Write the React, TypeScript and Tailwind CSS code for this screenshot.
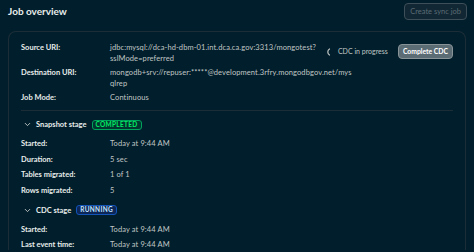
import { ChevronDown } from "lucide-react";

const font = { fontFamily: "Lato, 'Open Sans', sans-serif" };

function Row({ label, children }: { label: string; children: React.ReactNode }) {
  return (
    <div className="grid grid-cols-[89px_1fr] items-start">
      <span className="font-bold text-[#e8edeb]">{label}</span>
      <span className="whitespace-nowrap tracking-[0.1px] text-[#c1c7c6]">{children}</span>
    </div>
  );
}

function StageHeader({ title, badge }: { title: string; badge: "completed" | "running" }) {
  return (
    <div className="flex items-center gap-[4px] pl-[2px]">
      <ChevronDown className="h-[9px] w-[9px] text-[#c1c7c6]" strokeWidth={2.5} />
      <span className="font-bold text-[#e8edeb]">{title}</span>
      {badge === "completed" ? (
        <span className="ml-[1px] rounded-[3px] border border-[#00a35c] bg-[#023430] px-[3px] text-[6.5px] font-bold leading-[8px] tracking-[0.3px] text-[#00ed64]">
          COMPLETED
        </span>
      ) : (
        <span className="ml-[1px] rounded-[3px] border border-[#1254b7] bg-[#0c2657] px-[3px] text-[6.5px] font-bold leading-[8px] tracking-[0.3px] text-[#c3e7fe]">
          RUNNING
        </span>
      )}
    </div>
  );
}

export default function App() {
  return (
    <div className="h-[252px] w-[474px] overflow-hidden bg-[#001e2b] text-[7.5px] leading-[11px]" style={font}>
      <div className="flex items-center justify-between pl-[8px] pr-[7px] pt-[3px]">
        <h1 className="text-[10px] font-bold text-[#e8edeb]">Job overview</h1>
        <button className="h-[17px] rounded-[4px] border border-[#3d4f58] bg-[#112733] px-[5px] text-[7.5px] text-[#5c6c75]">
          Create sync job
        </button>
      </div>

      <div className="mx-[8px] mt-[11px] rounded-t-[8px] border border-b-0 border-[#1c2d38] px-[12px] pt-[10px]">
        <div className="flex items-start justify-between">
          <div className="flex min-w-0 flex-1 flex-col gap-[3px]">
            <Row label="Source URI:">
              jdbc:mysql://dca-hd-dbm-01.int.dca.ca.gov:3313/mongotest?
              <br />
              sslMode=preferred
            </Row>
            <Row label="Destination URI:">
              mongodb+srv://repuser:*****@development.3rfry.mongodbgov.net/mys
              <br />
              qlrep
            </Row>
            <Row label="Job Mode:">Continuous</Row>
          </div>
          <div className="flex shrink-0 items-center gap-[10px] whitespace-nowrap pt-[2px]">
            <div className="flex items-center gap-[7px] text-[7px] text-[#c1c7c6]">
              <svg width="6" height="8" viewBox="0 0 6 8">
                <path d="M4.5 1 A3.5 3.5 0 0 0 4.5 7" fill="none" stroke="#c1c7c6" strokeWidth="1.2" strokeLinecap="round" />
              </svg>
              <span>CDC in progress</span>
            </div>
            <button className="h-[15px] rounded-[4px] border border-[#889397] bg-[#5c6c75] px-[4px] text-[6.8px] font-bold text-white">
              Complete CDC
            </button>
          </div>
        </div>

        <div className="mt-[7px] h-px bg-[#1c2d38]" />

        <div className="mt-[8px] flex flex-col">
          <StageHeader title="Snapshot stage" badge="completed" />
          <div className="mt-[8px] flex flex-col gap-[4.5px]">
            <Row label="Started:">Today at 9:44 AM</Row>
            <Row label="Duration:">5 sec</Row>
            <Row label="Tables migrated:">1 of 1</Row>
            <Row label="Rows migrated:">5</Row>
          </div>
        </div>

        <div className="mt-[9px] flex flex-col">
          <StageHeader title="CDC stage" badge="running" />
          <div className="mt-[8px] flex flex-col gap-[4px]">
            <Row label="Started:">Today at 9:44 AM</Row>
            <Row label="Last event time:">Today at 9:44 AM</Row>
          </div>
        </div>
      </div>
    </div>
  );
}
